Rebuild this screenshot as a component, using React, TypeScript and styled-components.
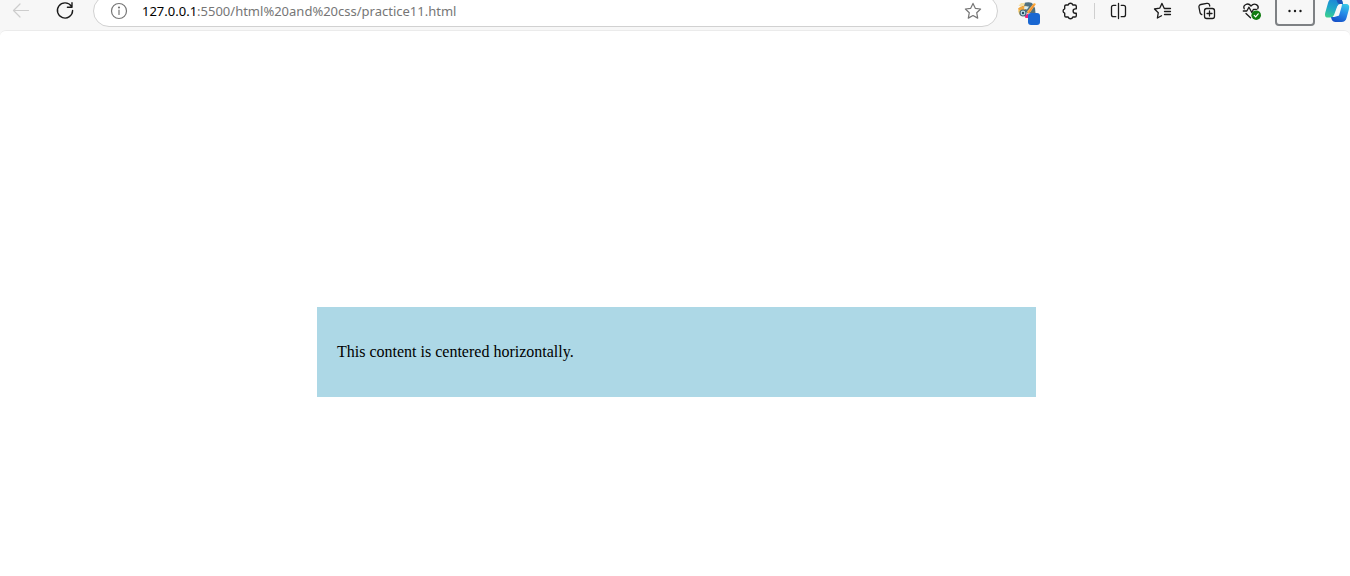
import React from "react";
import styled, { createGlobalStyle } from "styled-components";

const GlobalStyle = createGlobalStyle`
  body {
    margin: 0;
    background: #ffffff;
    overflow: hidden;
  }
`;

const Chrome = styled.header`
  height: 30px;
  overflow: hidden;
  background: #f7f7f7;
`;

const Toolbar = styled.nav`
  display: flex;
  align-items: center;
  gap: 4px;
  height: 38px;
  margin-top: -8px;
  padding-left: 1px;
`;

const ToolButton = styled.button<{ $width?: number; $focused?: boolean }>`
  display: flex;
  flex: none;
  align-items: center;
  justify-content: center;
  box-sizing: border-box;
  width: ${({ $width = 40 }) => $width}px;
  height: 30px;
  padding: 0;
  border: ${({ $focused }) => ($focused ? "2px solid #7e8184" : "none")};
  border-radius: 4px;
  background: transparent;
  color: #1b1b1b;

  &:disabled {
    color: #cdcdcd;
  }
`;

const AddressBar = styled.form`
  display: flex;
  flex: 1;
  align-items: center;
  box-sizing: border-box;
  min-width: 0;
  height: 32px;
  margin: 0 6px 0 4px;
  padding: 0 4px;
  border: 1px solid #d1d1d1;
  border-radius: 16px;
  background: #ffffff;
  font: 13px/20px "Noto Sans", sans-serif;

  ${ToolButton} {
    color: #767676;
  }
`;

const Host = styled.label`
  margin-left: 4px;
  color: #000000;
`;

const PathInput = styled.input`
  flex: 1;
  min-width: 0;
  height: 20px;
  padding: 0;
  border: 0;
  outline: 0;
  background: transparent;
  color: #767676;
  font: inherit;
`;

const Divider = styled.span`
  flex: none;
  width: 1px;
  height: 16px;
  background: #cfcfcf;
`;

const Page = styled.main`
  padding: 276px 314px 0 317px;
  border-top: 1px solid #ebebeb;
  border-radius: 6px 6px 0 0;
  background: #ffffff;
`;

const PageBackdrop = styled.div`
  background: linear-gradient(#f7f7f7 8px, #ffffff 8px);
`;

const ContentBox = styled.section`
  padding: 20px;
  background: #add8e6;
`;

const Message = styled.p`
  margin: 16px 0;
  color: #000000;
  font: 16px/18px "Liberation Serif", "Times New Roman", serif;
`;

const LineIcon = styled.svg`
  display: block;
  flex: none;
  width: 24px;
  height: 24px;
  overflow: visible;
  fill: none;
  stroke: currentColor;
  stroke-width: 1.2;
  stroke-linecap: round;
  stroke-linejoin: round;
`;

const SolidIcon = styled(LineIcon)`
  fill: currentColor;
  stroke: none;
`;

const BackIcon = () => (
  <LineIcon viewBox="0 0 24 24"><path d="M19.5 11.5H4.5M11 5l-6.5 6.5L11 18" /></LineIcon>
);

const ReloadIcon = () => (
  <LineIcon viewBox="0 0 24 24">
    <path d="M18.3 7.2A7.6 7.6 0 1 0 19.6 11.5M19 3.8v4.4h-4.6" strokeWidth="1.4" />
  </LineIcon>
);

const InfoIcon = () => (
  <LineIcon viewBox="-1 0 24 24">
    <circle cx="12" cy="12" r="7.5" />
    <path d="M12 11v4.5" />
    <circle cx="12" cy="8.5" r=".5" fill="currentColor" />
  </LineIcon>
);

const StarIcon = () => (
  <LineIcon viewBox="0 0 24 24">
    <path d="M12 4.4l2.3 4.9 5.3.7-3.9 3.7 1 5.4-4.7-2.6-4.7 2.6 1-5.4L4.4 10l5.3-.7z" />
  </LineIcon>
);

const ExtensionIcon = () => (
  <SolidIcon viewBox="0 0 24 24">
    <path d="M8 4.5q5-2 9-.5l3 5 .5 5H12L7 8z" fill="#50707f" />
    <path d="M3.5 7L6 4h4L9 7z" fill="#f5dfa0" />
    <path d="M3 9.5Q6 6 12 7l-2 4-6 1z" fill="#f2a63c" />
    <path d="M9.5 7.2l4.5.3-2 3-3-.8z" fill="#d9eef2" />
    <path d="M3 11.5l3-.5v6q-2.500-2-3-5.500z" fill="#efc560" />
    <path d="M9.500 17l4-3v5h-3z" fill="#f0237c" />
    <path d="M12 12.500l7-8.500 2 1-5.500 8-2.500 1.500z" fill="#ffb548" />
    <path d="M14 13l5-7" fill="none" stroke="#f58a2e" />
    <circle cx="8" cy="14" r="3" fill="#b9dfe8" stroke="#45677a" />
    <circle cx="8" cy="14" r="1.200" fill="#23495d" />
    <rect x="13" y="14" width="12" height="12" rx="3" fill="#1967d2" />
  </SolidIcon>
);

const PuzzleIcon = () => (
  <LineIcon viewBox="0 0 24 24">
    <path strokeWidth="1.35" d="M8 6h2.2a2.4 2.4 0 0 1 4.600 0H17a1.300 1.300 0 0 1 1.300 1.300v2.500h-1a2.200 2.200 0 0 0 0 4.400h1v2.500A1.300 1.300 0 0 1 17 18h-2.200a2.400 2.400 0 0 1-4.600 0H8a1.300 1.300 0 0 1-1.300-1.300v-2.500a2.300 2.300 0 0 1 0-4.400V7.300A1.300 1.300 0 0 1 8 6z" />
  </LineIcon>
);

const SplitIcon = () => (
  <LineIcon viewBox="0 0 24 24">
    <path strokeWidth="1.3" d="M8.8 6.3H6.5a2 2 0 0 0-2 2v7.4a2 2 0 0 0 2 2h2.3M14.200 6.300h2.300a2 2 0 0 1 2 2v7.400a2 2 0 0 1-2 2h-2.300M11.500 4.500v15" />
  </LineIcon>
);

const FavoritesIcon = () => (
  <LineIcon viewBox="-1 0 24 24">
    <path strokeWidth="1.3" d="M13.500 9.500h-1.200L10 4.400 7.700 9.200l-5.200.8 3.800 3.700-.9 5.300 4.100-2.200M13 9.500h5.500M12.500 12.500h6M12.500 15.500h6" />
  </LineIcon>
);

const CollectionsIcon = () => (
  <LineIcon viewBox="0 0 24 24">
    <g strokeWidth="1.3">
      <rect x="9.5" y="9.5" width="10" height="10" rx="2.2" />
      <path d="M14.5 12v5M12 14.5h5M6.8 15.5A2.5 2.5 0 0 1 5.1 14L4 8.3A2.3 2.3 0 0 1 5.8 5.5l6-1.1a2.4 2.4 0 0 1 2.8 1.8l.1.8" />
    </g>
  </LineIcon>
);

const HealthIcon = () => (
  <LineIcon viewBox="-1 0 24 24">
    <path strokeWidth="1.3" d="M4.2 9.8C2.5 6 8 3 11 7c3.5-4 8.5-.5 6.8 2.8M3.3 12h3.5l2.2-3.8 2.8 5.3 1.7-3.2h3M6 14.5l4.5 4.2" />
    <circle cx="16.2" cy="16.2" r="4.8" fill="#107c10" stroke="none" />
    <path d="M14.2 16.4l1.4 1.4 2.6-3" stroke="#ffffff" />
  </LineIcon>
);

const MoreIcon = () => (
  <SolidIcon viewBox="0 0 24 24">
    <circle cx="6.5" cy="12" r="1.2" />
    <circle cx="12" cy="12" r="1.2" />
    <circle cx="17.5" cy="12" r="1.2" />
  </SolidIcon>
);

const CopilotIcon = () => (
  <SolidIcon viewBox="-2 0 24 24">
    <defs>
      <linearGradient id="copilotLeft" x1=".5" y1="0" x2=".2" y2="1">
        <stop stopColor="#1b86d8" />
        <stop offset=".5" stopColor="#20a8c8" />
        <stop offset="1" stopColor="#3ccf8e" />
      </linearGradient>
      <linearGradient id="copilotRight" x1=".7" y1="0" x2=".3" y2="1">
        <stop stopColor="#36c5e6" />
        <stop offset=".45" stopColor="#268be8" />
        <stop offset="1" stopColor="#1550c8" />
      </linearGradient>
    </defs>
    <path d="M7 0h8q2 0 2.500 3l.5 2h-3q-2 0-3 3l-3 8q-1 2.500-4 2.500H3q-4 0-2.700-5L3 4q1-4 4-4z" fill="url(#copilotLeft)" />
    <path d="M17 5h4q4 0 3 5l-2.500 9q-1 4-5 4h-6q-3 0-4-3l-.5-2q4 0 5-.5l3-1 2.500-8.500q.7-3 .5-3z" fill="url(#copilotRight)" />
    <path d="M12.500 7.500h3.500l-2.700 9H9.700z" fill="#f7f7f7" />
    <path d="M11 0h4q2 0 2.500 3l.5 2h-3q-2.500 0-3-3z" fill="#1b55b8" />
  </SolidIcon>
);

export default function App() {
  return (
    <>
      <GlobalStyle />
      <Chrome>
        <Toolbar aria-label="Browser toolbar">
          <ToolButton aria-label="Back" disabled><BackIcon /></ToolButton>
          <ToolButton aria-label="Refresh"><ReloadIcon /></ToolButton>
          <AddressBar onSubmit={(event) => event.preventDefault()}>
            <ToolButton type="button" aria-label="Site information"><InfoIcon /></ToolButton>
            <Host htmlFor="address">127.0.0.1</Host>
            <PathInput
              id="address"
              type="text"
              spellCheck={false}
              defaultValue=":5500/html%20and%20css/practice11.html"
            />
            <ToolButton type="button" aria-label="Add to favorites"><StarIcon /></ToolButton>
          </AddressBar>
          <ToolButton $width={38} aria-label="Extension"><ExtensionIcon /></ToolButton>
          <ToolButton aria-label="Extensions"><PuzzleIcon /></ToolButton>
          <Divider />
          <ToolButton aria-label="Split screen"><SplitIcon /></ToolButton>
          <ToolButton aria-label="Favorites"><FavoritesIcon /></ToolButton>
          <ToolButton aria-label="Collections"><CollectionsIcon /></ToolButton>
          <ToolButton aria-label="Browser essentials"><HealthIcon /></ToolButton>
          <ToolButton $focused aria-label="Settings and more"><MoreIcon /></ToolButton>
          <ToolButton $width={31} aria-label="Copilot"><CopilotIcon /></ToolButton>
        </Toolbar>
      </Chrome>
      <PageBackdrop>
        <Page>
          <ContentBox>
            <Message>This content is centered horizontally.</Message>
          </ContentBox>
        </Page>
      </PageBackdrop>
    </>
  );
}
